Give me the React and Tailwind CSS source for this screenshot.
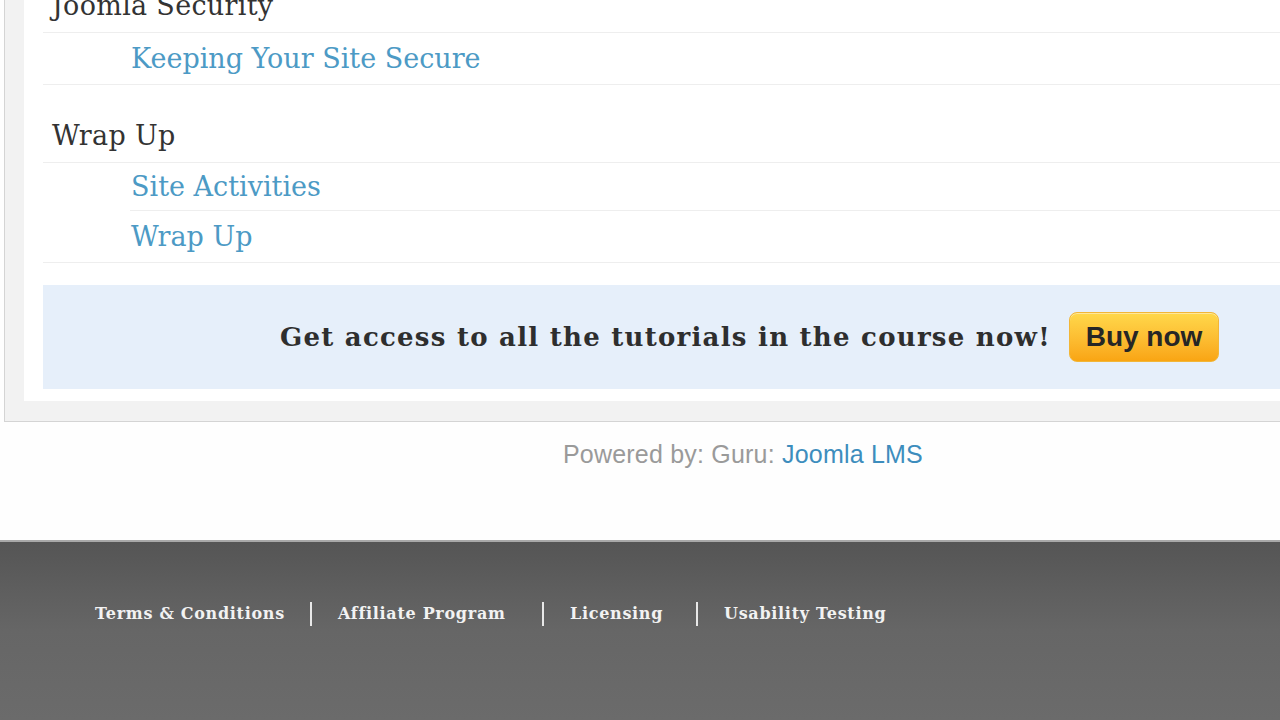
import React from "react";

const slab = { fontFamily: '"DejaVu Serif", serif' };

function Heading({ children }) {
  return (
    <div className="h-[50px] border-b border-[#eeeeee] flex items-end pb-[13px] pl-[9px] text-[27px] tracking-[0.3px] text-[#333333] leading-none" style={slab}>
      {children}
    </div>
  );
}

function Lesson({ children, last }) {
  return (
    <div className={last ? "border-b border-[#eeeeee]" : "pl-[87px]"}>
      <div className={last ? "pl-[88px] h-[51px] flex items-center text-[27px] text-[#4c9ac5] leading-none" : "border-b border-[#eeeeee] pl-px h-[48px] flex items-center text-[27px] text-[#4c9ac5] leading-none"} style={slab}>
        {children}
      </div>
    </div>
  );
}

function FootLink({ w, children }) {
  return <span className={"whitespace-nowrap " + w}>{children}</span>;
}

function Sep() {
  return <span className="ml-[30px] mr-[26px] w-[2px] h-[24px] bg-[#e8e8e8]" />;
}

export default function App() {
  return (
    <div className="w-[1280px] h-[720px] overflow-hidden bg-[#fefefe] flex flex-col">
      <div className="ml-[4px] w-[1500px] shrink-0 border-l border-b border-[#d4d4d4] bg-[#f2f2f2] pl-[19px] pb-[20px]">
        <div className="bg-white pl-[19px] pr-[20px] pb-[12px]">
          <div className="-mt-[17px]">
            <Heading>Joomla Security</Heading>
            <Lesson last>Keeping Your Site Secure</Lesson>
          </div>
          <div className="mt-[28px]">
            <Heading>Wrap Up</Heading>
            <Lesson>Site Activities</Lesson>
            <Lesson last>Wrap Up</Lesson>
          </div>
          <div className="mt-[22px] h-[104px] bg-[#e6effa] flex items-center pl-[237px] gap-[18px]">
            <span
              className="w-[771px] whitespace-nowrap text-[26px] font-bold text-[#2e2e2e] tracking-[1.25px]"
              style={slab}
            >
              Get access to all the tutorials in the course now!
            </span>
            <button
              className="w-[150px] h-[50px] rounded-[8px] border border-[#f2b637] bg-gradient-to-b from-[#ffd84a] to-[#f9a512] text-[28px] font-bold text-[#262626] shadow-[inset_0_1px_0_#ffe79a]"
              style={{ fontFamily: '"Liberation Sans", sans-serif' }}
            >
              Buy now
            </button>
          </div>
        </div>
      </div>
      <div
        className="pl-[563px] pt-[17px] h-[118px] shrink-0 text-[25px] text-[#9a9a9a] leading-[30px] tracking-[0.2px]"
        style={{ fontFamily: '"Liberation Sans", sans-serif' }}
      >
        Powered by: Guru: <span className="text-[#3d8dbd]">Joomla LMS</span>
      </div>
      <div className="flex-1 border-t-2 border-[#a8a8a8] bg-gradient-to-b from-[#555555] via-[#666666] to-[#6b6b6b]">
        <div className="pt-[60px] pl-[95px] flex items-center text-[16px] tracking-[0.7px] font-bold text-[#f2f2f2] leading-none" style={slab}>
          <FootLink w="w-[185px]">Terms &amp; Conditions</FootLink>
          <Sep />
          <FootLink w="w-[174px]">Affiliate Program</FootLink>
          <Sep />
          <FootLink w="w-[96px]">Licensing</FootLink>
          <Sep />
          <FootLink w="w-[168px]">Usability Testing</FootLink>
        </div>
      </div>
    </div>
  );
}
